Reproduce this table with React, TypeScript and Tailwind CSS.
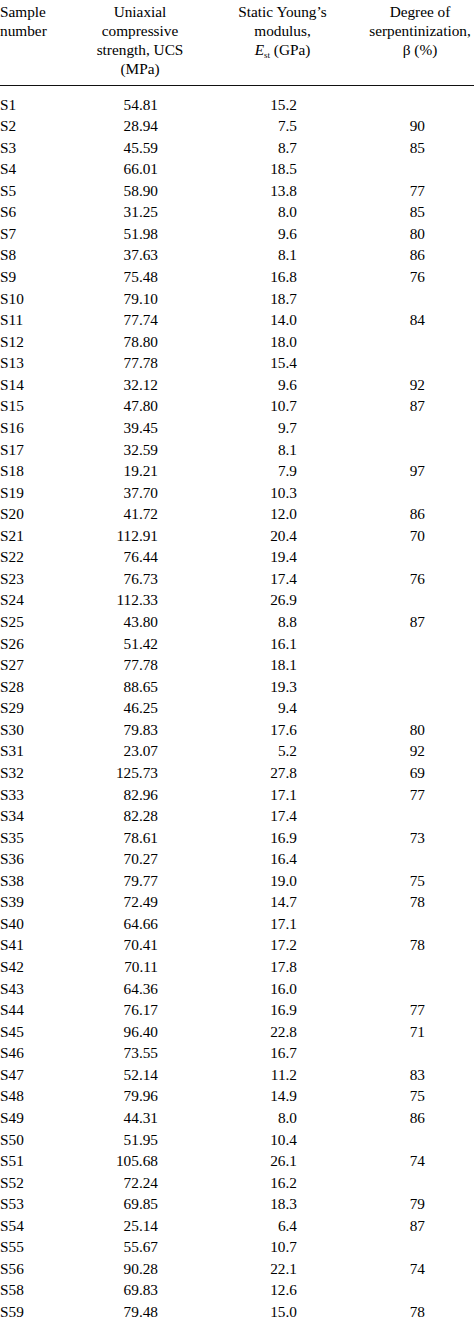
const rows: [string, string, string, string][] = [
  ['S1', '54.81', '15.2', ''],
  ['S2', '28.94', '7.5', '90'],
  ['S3', '45.59', '8.7', '85'],
  ['S4', '66.01', '18.5', ''],
  ['S5', '58.90', '13.8', '77'],
  ['S6', '31.25', '8.0', '85'],
  ['S7', '51.98', '9.6', '80'],
  ['S8', '37.63', '8.1', '86'],
  ['S9', '75.48', '16.8', '76'],
  ['S10', '79.10', '18.7', ''],
  ['S11', '77.74', '14.0', '84'],
  ['S12', '78.80', '18.0', ''],
  ['S13', '77.78', '15.4', ''],
  ['S14', '32.12', '9.6', '92'],
  ['S15', '47.80', '10.7', '87'],
  ['S16', '39.45', '9.7', ''],
  ['S17', '32.59', '8.1', ''],
  ['S18', '19.21', '7.9', '97'],
  ['S19', '37.70', '10.3', ''],
  ['S20', '41.72', '12.0', '86'],
  ['S21', '112.91', '20.4', '70'],
  ['S22', '76.44', '19.4', ''],
  ['S23', '76.73', '17.4', '76'],
  ['S24', '112.33', '26.9', ''],
  ['S25', '43.80', '8.8', '87'],
  ['S26', '51.42', '16.1', ''],
  ['S27', '77.78', '18.1', ''],
  ['S28', '88.65', '19.3', ''],
  ['S29', '46.25', '9.4', ''],
  ['S30', '79.83', '17.6', '80'],
  ['S31', '23.07', '5.2', '92'],
  ['S32', '125.73', '27.8', '69'],
  ['S33', '82.96', '17.1', '77'],
  ['S34', '82.28', '17.4', ''],
  ['S35', '78.61', '16.9', '73'],
  ['S36', '70.27', '16.4', ''],
  ['S38', '79.77', '19.0', '75'],
  ['S39', '72.49', '14.7', '78'],
  ['S40', '64.66', '17.1', ''],
  ['S41', '70.41', '17.2', '78'],
  ['S42', '70.11', '17.8', ''],
  ['S43', '64.36', '16.0', ''],
  ['S44', '76.17', '16.9', '77'],
  ['S45', '96.40', '22.8', '71'],
  ['S46', '73.55', '16.7', ''],
  ['S47', '52.14', '11.2', '83'],
  ['S48', '79.96', '14.9', '75'],
  ['S49', '44.31', '8.0', '86'],
  ['S50', '51.95', '10.4', ''],
  ['S51', '105.68', '26.1', '74'],
  ['S52', '72.24', '16.2', ''],
  ['S53', '69.85', '18.3', '79'],
  ['S54', '25.14', '6.4', '87'],
  ['S55', '55.67', '10.7', ''],
  ['S56', '90.28', '22.1', '74'],
  ['S58', '69.83', '12.6', ''],
  ['S59', '79.48', '15.0', '78'],
];

const cols = 'grid grid-cols-[78px_124px_164px_108px]';

export default function App() {
  return (
    <div className="w-[474px] h-[1321px] overflow-hidden bg-white text-black font-['Liberation_Serif','Times_New_Roman',serif] text-[15.3px]">
      {/* Header */}
      <div className={`${cols} items-start leading-[19px] pt-[1.5px] pb-[7px] border-b-[1.5px] border-[#111]`}>
        <div className="text-left">
          Sample
          <br />
          number
        </div>
        <div className="text-center">
          Uniaxial
          <br />
          compressive
          <br />
          strength, UCS
          <br />
          (MPa)
        </div>
        <div className="text-center pr-[3px]">
          Static Young’s
          <br />
          modulus,
          <br />
          <span className="italic">E</span>
          <sub className="text-[9px] align-baseline relative top-[3px]">st</sub> (GPa)
        </div>
        <div className="text-center whitespace-nowrap">
          Degree of
          <br />
          serpentinization,
          <br />
          β (%)
        </div>
      </div>

      {/* Rows */}
      <div className="mt-[8px]">
        {rows.map(([id, ucs, est, beta]) => (
          <div key={id} className={`${cols} h-[21.57px] leading-[21.57px]`}>
            <div className="text-left">{id}</div>
            <div className="text-right pr-[44px]">{ucs}</div>
            <div className="text-right pr-[69px]">{est}</div>
            <div className="text-right pr-[49px]">{beta}</div>
          </div>
        ))}
      </div>
    </div>
  );
}
